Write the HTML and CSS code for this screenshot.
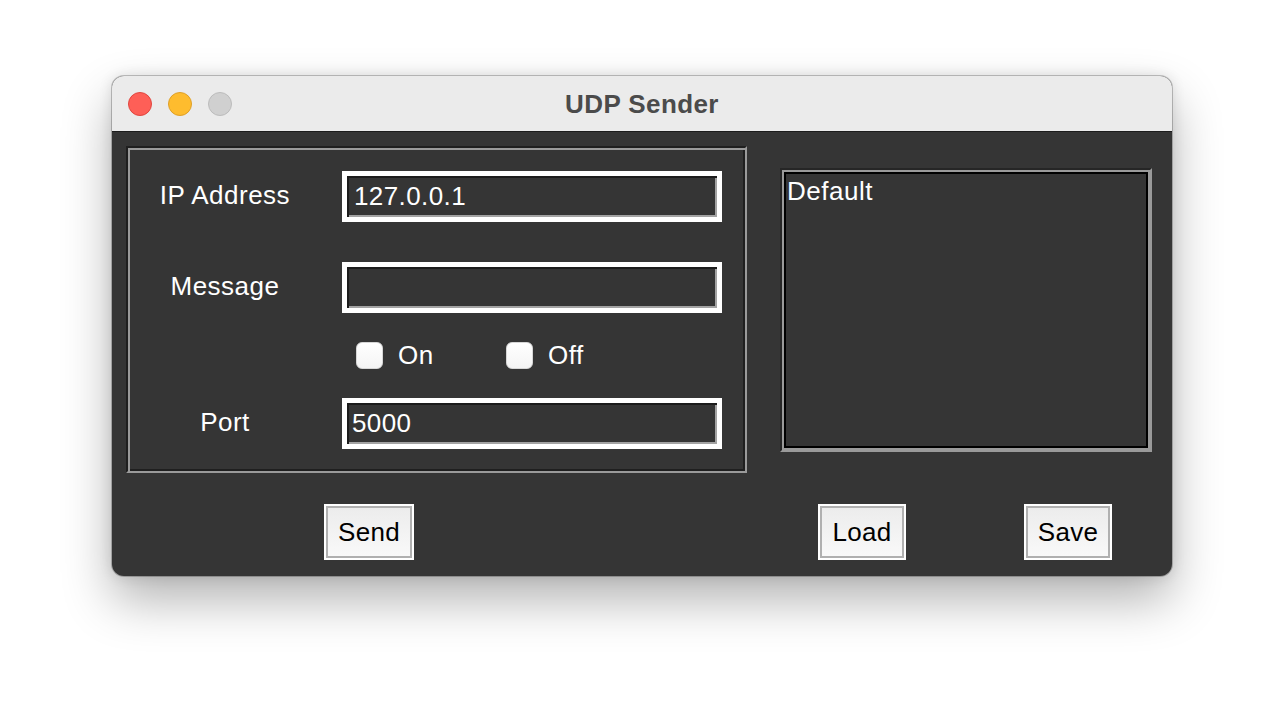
FILE: index.html
```html
<!DOCTYPE html>
<html>
<head>
<meta charset="utf-8">
<title>UDP Sender</title>
<link rel="stylesheet" href="styles.css">
</head>
<body>
<div class="window">
  <div class="titlebar">
    <div class="lights">
      <span class="light red"></span>
      <span class="light yellow"></span>
      <span class="light grey"></span>
    </div>
    <div class="title">UDP Sender</div>
  </div>
  <div class="content">
    <div class="toprow">
      <div class="frame">
        <div class="row row-ip">
          <div class="label">IP Address</div>
          <div class="entry"><span class="entry-text">127.0.0.1</span></div>
        </div>
        <div class="row row-msg">
          <div class="label">Message</div>
          <div class="entry"><span class="entry-text"></span></div>
        </div>
        <div class="checkrow">
          <div class="check"><span class="box"></span><span class="check-label">On</span></div>
          <div class="check"><span class="box"></span><span class="check-label">Off</span></div>
        </div>
        <div class="row row-port">
          <div class="label">Port</div>
          <div class="entry"><span class="entry-text port-text">5000</span></div>
        </div>
      </div>
      <div class="listbox">
        <div class="list-inner">
          <div class="list-item">Default</div>
        </div>
      </div>
    </div>
    <div class="buttonrow">
      <div class="btn btn-send"><span>Send</span></div>
      <div class="btn btn-load"><span>Load</span></div>
      <div class="btn btn-save"><span>Save</span></div>
    </div>
  </div>
</div>
</body>
</html>
```

FILE: styles.css
```css
html, body {
  margin: 0;
  padding: 0;
  background: #ffffff;
}
body {
  font-family: "Liberation Sans", Arial, sans-serif;
  width: 1284px;
  height: 724px;
  overflow: hidden;
}
.window {
  margin-left: 112px;
  margin-top: 76px;
  width: 1060px;
  height: 500px;
  border-radius: 12px;
  overflow: hidden;
  box-shadow: 0 24px 50px rgba(0, 0, 0, 0.30), 0 0 14px rgba(0, 0, 0, 0.12), 0 0 0 1px rgba(0, 0, 0, 0.22);
  background: #353535;
  display: flex;
  flex-direction: column;
}
.titlebar {
  height: 55px;
  background: #ebebeb;
  border-bottom: 1px solid #1c1c1c;
  display: flex;
  align-items: center;
  position: relative;
  flex: none;
}
.lights {
  display: flex;
  gap: 16px;
  padding-left: 16px;
  padding-top: 1px;
}
.light {
  width: 22px;
  height: 22px;
  border-radius: 50%;
  display: block;
}
.red { background: #fe5f57; border: 1px solid #e1463f; }
.yellow { background: #febc2e; border: 1px solid #dfa028; }
.grey { background: #d0d0d0; border: 1px solid #bcbcbc; }
.title {
  position: absolute;
  left: 0;
  right: 0;
  top: 0;
  bottom: 0;
  display: flex;
  align-items: center;
  justify-content: center;
  font-weight: bold;
  font-size: 26px;
  letter-spacing: 0.4px;
  color: #4b4b4b;
  padding-top: 1px;
}
.content {
  padding: 14px 20px 0 14px;
  flex: 1;
  display: flex;
  flex-direction: column;
}
.toprow {
  display: flex;
  align-items: flex-start;
}
.frame {
  width: 621px;
  height: 327px;
  box-sizing: border-box;
  border: 2px solid;
  border-color: #1f1f1f #9a9a9a #9a9a9a #1f1f1f;
  box-shadow: inset 2px 2px 0 #9a9a9a, inset -2px -2px 0 #1f1f1f;
  padding: 23px 23px 0 2px;
  display: flex;
  flex-direction: column;
}
.row {
  display: flex;
  align-items: center;
  height: 51px;
}
.row-msg { margin-top: 40px; }
.row-port { margin-top: 29px; }
.label {
  width: 190px;
  text-align: center;
  color: #ffffff;
  font-size: 26px;
  letter-spacing: 0.5px;
  padding-bottom: 2px;
}
.entry {
  margin-left: 22px;
  width: 380px;
  height: 51px;
  box-sizing: border-box;
  border: 5px solid #ffffff;
  background: #353535;
  box-shadow: inset 2px 2px 0 #1c1c1c, inset -2px -2px 0 #a3a3a3;
  display: flex;
  align-items: center;
  padding-left: 7px;
}
.entry-text {
  color: #ffffff;
  font-size: 26px;
  letter-spacing: 0.4px;
}
.port-text { margin-left: -2px; }
.checkrow {
  display: flex;
  align-items: center;
  height: 27px;
  margin-top: 29px;
  padding-left: 226px;
}
.check {
  width: 150px;
  display: flex;
  align-items: center;
}
.box {
  width: 27px;
  height: 27px;
  box-sizing: border-box;
  border-radius: 6px;
  background: linear-gradient(#ffffff, #f4f4f4);
  border: 1px solid #d6d6d6;
  display: block;
}
.check-label {
  margin-left: 15px;
  color: #ffffff;
  font-size: 26px;
  letter-spacing: 0.5px;
}
.listbox {
  margin-left: 33px;
  margin-top: 22px;
  width: 372px;
  height: 284px;
  box-sizing: border-box;
  border: 2px solid;
  border-color: #262626 #9a9a9a #9a9a9a #262626;
  padding: 2px;
  background: #9a9a9a;
}
.list-inner {
  height: 100%;
  box-sizing: border-box;
  border: 2px solid #000000;
  background: #353535;
  padding: 2px 0 0 1px;
}
.list-item {
  color: #ffffff;
  font-size: 26px;
  letter-spacing: 0.5px;
}
.buttonrow {
  display: flex;
  margin-top: 31px;
}
.btn {
  height: 56px;
  box-sizing: border-box;
  border: 2px solid #ffffff;
  display: flex;
}
.btn span {
  flex: 1;
  border: 2px solid #b0b0b0;
  background: linear-gradient(#ececec, #f9f9f9);
  display: flex;
  align-items: center;
  justify-content: center;
  color: #000000;
  font-size: 26px;
  letter-spacing: 0.3px;
}
.btn-send { width: 90px; margin-left: 198px; }
.btn-load { width: 88px; margin-left: 404px; }
.btn-save { width: 88px; margin-left: 118px; }
```
